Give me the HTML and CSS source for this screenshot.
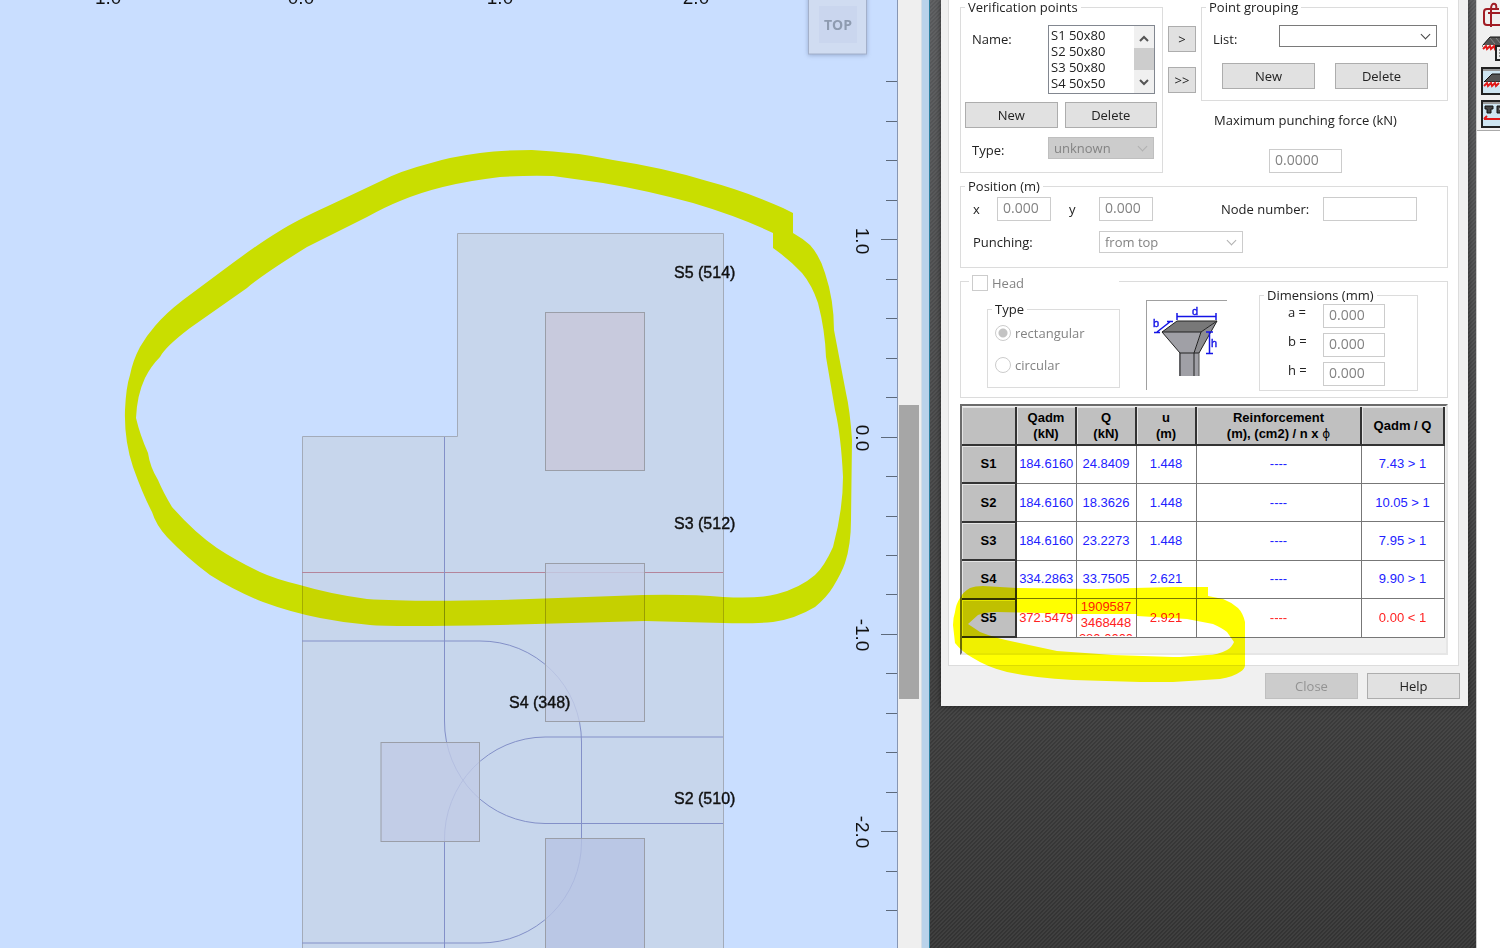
FILE: index.html
```html
<!DOCTYPE html>
<html lang="en">
<head>
  <meta charset="UTF-8" />
  <meta name="viewport" content="width=device-width, initial-scale=1.0"/>
  <title>Punching verification</title>
  <link rel="stylesheet" href="styles.css">
</head>
<body>

<main class="plan">
  <svg class="plan-view" viewBox="0 0 898 948" preserveAspectRatio="xMaxYMin slice">
    <!-- slab -->
    <path class="slab" d="M457.500 233.500H723.500V960H302.500V436.500H457.500Z"/>
    <path class="red-line" d="M302 572.500H723"/>
    <!-- critical perimeters -->
    <path class="perimeter" d="M444.500 437V721A101 102 0 0 0 545 823.500H723"/>
    <path class="perimeter" d="M723 737H545A101 102 0 0 0 444.500 841V960"/>
    <path class="perimeter" d="M302 641H480A101 101 0 0 1 581.500 742V842A101 101 0 0 1 480 943H302"/>
    <!-- columns -->
    <rect class="column s5" x="545.500" y="312.500" width="99" height="158"/>
    <rect class="column s3" x="545.500" y="563.500" width="99" height="158"/>
    <rect class="column s4" x="381" y="742.500" width="98.500" height="99"/>
    <rect class="column s2" x="545.500" y="838.500" width="99" height="158"/>
    <g class="point-label">
      <text x="674" y="278">S5 (514)</text>
      <text x="674" y="529">S3 (512)</text>
      <text x="509" y="708">S4 (348)</text>
      <text x="674" y="804">S2 (510)</text>
    </g>
    <!-- rulers -->
    <path class="tick" d="M886 81.500h12M886 121.500h12M886 160.500h12M886 200.500h12M881 239.500h17M886 279.500h12M886 318.500h12M886 358.500h12M886 397.500h12M881 437.500h17M886 476.500h12M886 516.500h12M886 555.500h12M886 594.500h12M881 634.500h17M886 673.500h12M886 713.500h12M886 752.500h12M886 792.500h12M881 831.500h17M886 871.500h12M886 910.500h12"/>
    <path class="ruler-edge" d="M897.500 0V960"/>
    <g class="ruler-label">
      <text x="105" y="4">-1.0</text>
      <text x="301" y="4">0.0</text>
      <text x="500" y="4">1.0</text>
      <text x="696" y="4">2.0</text>
      <text transform="translate(856 241) rotate(90)">1.0</text>
      <text transform="translate(856 438) rotate(90)">0.0</text>
      <text transform="translate(856 635) rotate(90)">-1.0</text>
      <text transform="translate(856 832) rotate(90)">-2.0</text>
    </g>
    <!-- view cube -->
    <rect class="cube" x="808.500" y="-6" width="58" height="60"/>
    <rect class="cube-face" x="819" y="6" width="38" height="37"/>
    <text class="cube-label" x="838" y="30">TOP</text>
    <path class="marker" fill-rule="evenodd" d="M532 150Q500 150 480 153Q450 157 431 163Q400 171 381 181Q360 191 328 206Q295 221 278 232Q258 244 222 271L183 300Q166 313 155 326Q147 335 140 347Q133 360 130 375Q126 387 125 410Q124 440 133 467Q143 495 152 512Q156 525 167 537Q187 558 210 575Q235 591 263 602Q290 612 320 618Q345 623 370 625Q390 627 500 625L645 621L723 623Q750 624 773 622Q795 619 815 607Q827 597 833 587Q842 572 845 563Q851 545 851 520L852 440Q850 410 846 393L834 330Q834 300 825 273Q820 256 810 245Q802 238 793 233V213L783 208Q745 191 707 181Q665 168 613 160Q575 152 532 150Z
      M500 177Q530 175 553 176L603 183Q645 190 693 203Q740 217 773 233V248Q790 260 802 273Q812 285 818 303Q825 330 826 357L835 410Q841 435 843 477Q843 510 833 547Q824 567 815 575Q800 588 777 594Q760 599 723 597Q690 594 643 595L500 600Q410 602 367 599Q330 594 300 585Q275 579 260 572Q235 560 217 548Q195 533 172 507Q163 492 158 480Q150 467 148 453Q140 435 136 418Q137 395 145 378Q151 366 160 357Q165 347 190 328L247 288Q262 275 307 247L367 217Q385 207 400 201Q440 184 500 177Z"/>
  </svg>
</main>

<div class="scroll-track"><div class="scroll-thumb"></div></div>
<div class="window-edge"></div>

<div class="desktop">
  <form class="dialog">
    <div class="panel">
      <div class="top-row">
        <fieldset>
          <legend>Verification points</legend>
          <div class="points">
            <label for="names">Name:</label>
            <div class="listbox">
              <select id="names" size="4">
                <option>S1 50x80</option>
                <option>S2 50x80</option>
                <option>S3 50x80</option>
                <option>S4 50x50</option>
              </select>
              <svg class="list-scroll" viewBox="0 0 20 67">
                <rect width="20" height="67" fill="#f0f0f0"/>
                <rect y="22" width="20" height="22" fill="#cdcdcd"/>
                <path d="M6 15l4-4 4 4M6 54l4 4 4-4" fill="none" stroke="#555" stroke-width="2"/>
              </svg>
            </div>
            <div class="button-pair">
              <button type="button">New</button>
              <button type="button">Delete</button>
            </div>
            <label for="kind">Type:</label>
            <span class="combo filled">
              <select id="kind" disabled><option>unknown</option></select>
            </span>
          </div>
        </fieldset>

        <div class="move-buttons">
          <button type="button">&gt;</button>
          <button type="button">&gt;&gt;</button>
        </div>

        <div>
          <fieldset>
            <legend>Point grouping</legend>
            <div class="grouping">
              <label for="group">List:</label>
              <span class="combo active">
                <select id="group"><option></option></select>
              </span>
              <div class="button-pair">
                <button type="button">New</button>
                <button type="button">Delete</button>
              </div>
            </div>
          </fieldset>
          <div class="force">
            <label for="force">Maximum punching force (kN)</label>
            <input type="text" id="force" value="0.0000" disabled />
          </div>
        </div>
      </div>

      <fieldset>
        <legend>Position (m)</legend>
        <div class="position">
          <label for="pos-x">x</label>
          <input type="text" id="pos-x" class="short" value="0.000" disabled />
          <label for="pos-y">y</label>
          <input type="text" id="pos-y" class="short" value="0.000" disabled />
          <label for="node">Node number:</label>
          <input type="text" id="node" disabled />
          <label class="wide-label" for="punching">Punching:</label>
          <span class="combo punching">
            <select id="punching" disabled><option>from top</option></select>
          </span>
        </div>
      </fieldset>

      <fieldset>
        <legend class="head-legend">
          <input type="checkbox" id="head" disabled />
          <label for="head">Head</label>
        </legend>
        <div class="head">
          <fieldset class="head-type">
            <legend>Type</legend>
            <div class="radios">
              <label><input type="radio" name="shape" checked disabled />rectangular</label>
              <label><input type="radio" name="shape" disabled />circular</label>
            </div>
          </fieldset>
          <svg class="head-picture" viewBox="0 0 81 90">
            <path d="M0 .5H81M.5 0V90" stroke="#a0a0a0" fill="none"/>
            <path d="M33 53H53V76H33Z" fill="#a0a0a6"/>
            <path d="M16 32H55L48 53H34Z" fill="#a0a0a6"/>
            <path d="M55 32L71 21L53 53H48Z" fill="#8c8c90"/>
            <path d="M16 32L31 21H71L55 32Z" fill="#787878"/>
            <path d="M16 32L31 21H71L55 32ZM16 32L34 53H48L55 32M48 53H53L71 21M34 53V76M48 53V76" fill="none" stroke="#222"/>
            <path d="M53 53V76" stroke="#555"/>
            <path d="M31 13V20M31 16.500H70M70 13V20M60 32H67M63.500 32V53M60 53.500H67M21 21.500H27M8 32.500H14M11 32L25 21" fill="none" stroke="#1414e6" stroke-width="1.500"/>
            <text x="46" y="15">d</text>
            <text x="7" y="27">b</text>
            <text x="65" y="47">h</text>
          </svg>
          <fieldset class="head-dimensions">
            <legend>Dimensions (mm)</legend>
            <div class="dimensions">
              <label for="dim-a">a =</label>
              <input type="text" id="dim-a" value="0.000" disabled />
              <label for="dim-b">b =</label>
              <input type="text" id="dim-b" value="0.000" disabled />
              <label for="dim-h">h =</label>
              <input type="text" id="dim-h" value="0.000" disabled />
            </div>
          </fieldset>
        </div>
      </fieldset>

      <div class="results">
        <table>
          <colgroup>
            <col class="col-name"><col class="col-num"><col class="col-num"><col class="col-num"><col><col class="col-ratio">
          </colgroup>
          <thead>
            <tr>
              <th></th>
              <th>Qadm<br>(kN)</th>
              <th>Q<br>(kN)</th>
              <th>u<br>(m)</th>
              <th>Reinforcement<br>(m), (cm2) / n x <span class="phi">ϕ</span></th>
              <th>Qadm / Q</th>
            </tr>
          </thead>
          <tbody>
            <tr><th>S1</th><td>184.6160</td><td>24.8409</td><td>1.448</td><td>----</td><td>7.43 &gt; 1</td></tr>
            <tr><th>S2</th><td>184.6160</td><td>18.3626</td><td>1.448</td><td>----</td><td>10.05 &gt; 1</td></tr>
            <tr><th>S3</th><td>184.6160</td><td>23.2273</td><td>1.448</td><td>----</td><td>7.95 &gt; 1</td></tr>
            <tr><th>S4</th><td>334.2863</td><td>33.7505</td><td>2.621</td><td>----</td><td>9.90 &gt; 1</td></tr>
            <tr class="failed"><th>S5</th><td>372.5479</td><td><div class="clipped">1909587<br>3468448<br>280.0000</div></td><td>2.921</td><td>----</td><td>0.00 &lt; 1</td></tr>
          </tbody>
        </table>
      </div>
    </div>

    <div class="footer">
      <button type="button" disabled>Close</button>
      <button type="button">Help</button>
    </div>

    <svg class="marker-layer" viewBox="941 0 527 706" preserveAspectRatio="xMinYMin">
      <path class="marker" fill-rule="evenodd" d="M1208 587H1173L1097 589L1017 588L983 586Q975 586 970 588Q963 592 960 598Q956 604 955 612Q953 618 953 625L955 643Q962 652 973 658Q987 667 1007 672Q1035 678 1073 680L1140 682H1173L1220 679Q1233 677 1240 672Q1245 669 1245 665V622Q1243 613 1238 608Q1231 602 1223 599L1208 596Z
        M968 624L978 615Q985 612 997 612L1040 613L1073 614H1137V616L1187 619L1213 624Q1222 628 1227 632L1234 642Q1232 647 1227 650Q1218 655 1207 655L1180 657H1173L1113 655L1057 651L1015 642Q995 638 980 632Z"/>
    </svg>
  </form>
</div>

<aside class="side">
  <div class="toolbar">
    <button type="button" aria-label="Contour">
      <svg viewBox="0 0 29 29"><path d="M18 9H6Q3 9 3 12V22Q3 25 6 25H29M10 27V9Q10 3 14 4Q16 5 15 9M7 13H20" fill="none" stroke="#a01c24" stroke-width="2"/></svg>
    </button>
    <button type="button" aria-label="Slab report">
      <svg viewBox="0 0 29 29"><path d="M2 12L9 4H29V14H2Z" fill="#555" stroke="#111"/><path d="M9 5L14 11M15 5L20 11M22 5L27 11" stroke="#888"/><rect x="2" y="12" width="20" height="4" fill="#eee"/><path d="M2 16l3-3 1 3 3-3 1 3 3-3 1 3 3-3" fill="none" stroke="#e01818" stroke-width="2"/><path d="M15 13H29V27H15Z" fill="#eee" stroke="#222" stroke-width="2"/><path d="M18 17H29M18 20H29M18 23H29" stroke="#333"/></svg>
    </button>
    <button type="button" aria-label="Slab view">
      <svg viewBox="0 0 29 29"><path d="M1 2H30V28H1Z" fill="#cfe6f2" stroke="#222" stroke-width="2"/><path d="M2 3H30V5H2Z" fill="#999"/><path d="M3 16L11 8H29V16Z" fill="#555" stroke="#111"/><rect x="3" y="16" width="26" height="4" fill="#eee"/><path d="M3 20l3-3 1 3 3-3 1 3 3-3 1 3 3-3" fill="none" stroke="#e01818" stroke-width="2"/></svg>
    </button>
    <button type="button" aria-label="Sections">
      <svg viewBox="0 0 29 29"><path d="M1 2H30V28H1Z" fill="#cfe6f2" stroke="#222" stroke-width="2"/><path d="M2 3H30V5H2Z" fill="#999"/><path d="M4 7H12V10H10V14H6V10H4ZM16 7H29V14H16Z" fill="#444" stroke="#111"/><path d="M18 10H23" stroke="#ddd"/><path d="M29 20H3M6 17L3 20" stroke="#e01818" stroke-width="2"/></svg>
    </button>
  </div>
</aside>

</body>
</html>
```
FILE: styles.css
```css
* {
  box-sizing: border-box;
}
body {
  margin: 0;
  height: 100vh;
  display: flex;
  overflow: hidden;
  background: #fff;
  color: #222;
  font: 13px/16px "Open Sans", sans-serif;
}

/* plan view */
.plan {
  flex: 1;
  min-width: 0;
  background: #c9deff;
}
.plan-view {
  display: block;
  width: 100%;
  height: 100%;
}
.slab { fill: #c7d6ec; stroke: #a3abb9; }
.red-line { stroke: #b4859b; }
.perimeter { fill: none; stroke: #8390c8; }
.column { stroke: #9a9ea8; fill-opacity: 0.8; }
.s5 { fill: #c8c7d9; }
.s3 { fill: #c4cee7; }
.s4 { fill: #c1cae6; }
.s2 { fill: #b6c3e4; }
.point-label {
  font: 16px "Liberation Sans", sans-serif;
  fill: #111;
  stroke: #111;
  stroke-width: 0.4px;
}
.tick { stroke: #5d6a7c; }
.ruler-edge { stroke: #8796b3; }
.ruler-label {
  font: 19px "Liberation Sans", sans-serif;
  fill: #111;
  text-anchor: middle;
}
.cube {
  fill: #d0dcf1;
  stroke: #a3b0ca;
  filter: drop-shadow(0 1px 2px rgba(80,100,140,0.4));
}
.cube-face { fill: #cad6ee; }
.cube-label {
  font: bold 14px "Open Sans", sans-serif;
  fill: #8e9bb0;
  text-anchor: middle;
}
.marker {
  fill: #ff0;
  mix-blend-mode: multiply;
}

.scroll-track {
  width: 23px;
  background: #efefef;
  padding-left: 1px;
}
.scroll-thumb {
  width: 20px;
  height: 31vh;
  margin-top: 405px;
  background: #a6a6a6;
}
.window-edge {
  width: 9px;
  background: #b9d2ea;
  border-left: 1px solid #d5dde5;
  border-right: 1px solid #2d7f9d;
}

/* dialog */
.desktop {
  flex: 0 0 546px;
  padding: 0 8px 0 11px;
  background:
    linear-gradient(135deg, rgba(255,255,255,0.06) 25%, transparent 25% 50%, rgba(255,255,255,0.06) 50% 75%, transparent 75%) 0 0 / 4px 4px,
    linear-gradient(#58595b, #3c3c3c 70%, #333);
}
.dialog {
  position: relative;
  background: #f0f0f0;
  padding: 0 8px 7px 7px;
  box-shadow: 0 0 6px rgba(0,0,0,0.5);
}
.panel {
  display: flex;
  flex-direction: column;
  gap: 6px;
  margin-right: 1px;
  padding: 0 10px 10px 11px;
  background: #fff;
  border: 1px solid #dcdcdc;
  border-top: none;
}
fieldset {
  margin: 0;
  padding: 0 4px;
  min-width: 0;
  border: 1px solid #dcdcdc;
}
legend {
  padding: 0 3px;
  line-height: 14px;
}
button {
  height: 26px;
  padding: 0;
  background: #e1e1e1;
  border: 1px solid #adadad;
  color: #222;
  font: inherit;
}
button:disabled {
  background: #ccc;
  border-color: #bfbfbf;
  color: #939393;
}
input[type="text"] {
  width: 100%;
  height: 24px;
  padding: 0 5px 3px;
  background: #fff;
  border: 1px solid #ccc;
  color: #838383;
  font: inherit;
  font-size: 14px;
}
.combo {
  position: relative;
}
.combo select {
  appearance: none;
  display: block;
  width: 100%;
  height: 22px;
  padding: 0 5px;
  background: #fff;
  border: 1px solid #ccc;
  border-radius: 0;
  color: #838383;
  font: inherit;
  opacity: 1;
}
.combo::after {
  content: "";
  position: absolute;
  top: 6px;
  right: 8px;
  width: 6px;
  height: 6px;
  border: solid #b0b0b0;
  border-width: 0 1px 1px 0;
  transform: rotate(45deg);
}
.active select { border-color: #7a7a7a; }
.active::after { border-color: #444; }
.filled select {
  background: #ccc;
  border-color: #bfbfbf;
}

.top-row {
  display: grid;
  grid-template-columns: 203px 28px 1fr;
  column-gap: 5px;
}
.points {
  display: grid;
  grid-template-columns: 1fr 109px;
  row-gap: 8px;
  padding: 11px 1px 10px 0;
}
.points label {
  padding: 6px 0 0 7px;
}
.points .combo {
  margin: 1px 3px 0 0;
}
.listbox {
  display: flex;
  height: 69px;
  margin-right: 2px;
  border: 1px solid #828790;
}
.listbox select {
  flex: 1;
  min-width: 0;
  padding: 1px 0;
  border: none;
  outline: none;
  overflow: hidden;
  background: #fff;
  color: #222;
  font: inherit;
}
.listbox option {
  display: flex;
  align-items: center;
  height: 16px;
  min-height: 0;
  padding: 0 2px;
}
.list-scroll {
  width: 20px;
  height: 67px;
}
.button-pair {
  grid-column: 1 / -1;
  display: grid;
  grid-template-columns: 1fr 1fr;
  column-gap: 7px;
}
.move-buttons {
  display: flex;
  flex-direction: column;
  gap: 15px;
  padding-top: 26px;
}
.grouping {
  display: grid;
  grid-template-columns: 66px 1fr;
  row-gap: 16px;
  align-items: end;
  padding: 11px 6px 11px 7px;
}
.grouping .button-pair {
  column-gap: 20px;
  padding: 0 9px;
}
.force {
  display: flex;
  flex-direction: column;
  align-items: center;
  gap: 21px;
  padding: 11px 38px 0 0;
}
.force input[type="text"] {
  width: 73px;
}
.position {
  display: grid;
  grid-template-columns: 24px 72px 30px 122px 102px 94px;
  row-gap: 10px;
  align-items: center;
  padding: 4px 0 14px 8px;
}
.position .short {
  width: 54px;
}
.wide-label {
  grid-column: span 3;
}
.punching {
  grid-column: span 2;
  width: 144px;
}
.head-legend {
  display: flex;
  width: 150px;
  height: 14px;
  margin-left: 4px;
  line-height: 18px;
  color: #838383;
}
input[type="checkbox"], input[type="radio"] {
  appearance: none;
  flex: none;
  width: 16px;
  height: 16px;
  margin: 0 4px 0 0;
  background: #fff;
  border: 1px solid #ccc;
}
input[type="checkbox"] {
  margin-top: 1px;
}
input[type="radio"] {
  border-radius: 50%;
}
input[type="radio"]:checked {
  background: radial-gradient(#c3c3c3 4px, #fff 5px);
}
.head {
  display: flex;
  align-items: flex-start;
  gap: 26px;
  padding: 0 0 6px 22px;
}
.head-type {
  flex: 0 0 133px;
  margin-top: 14px;
}
.radios {
  display: flex;
  flex-direction: column;
  gap: 16px;
  padding: 9px 3px 14px;
  color: #838383;
}
.radios label {
  display: flex;
}
.head-picture {
  flex: 0 0 81px;
  height: 90px;
  margin-top: 12px;
}
.head-picture text {
  font: 11px "Liberation Sans", sans-serif;
  fill: #1414e6;
  stroke: #1414e6;
  stroke-width: 0.4px;
}
.head-dimensions {
  flex: 0 0 159px;
  margin-left: 6px;
}
.dimensions {
  display: grid;
  grid-template-columns: 35px 62px;
  row-gap: 5px;
  padding: 2px 0 4px 24px;
}

/* results */
.results {
  padding: 1px 1px 15px 0;
  background: #f0f0f0;
  border: 2px solid #6b6b6b;
  border-right-color: #e6e6e6;
  border-bottom-color: #e6e6e6;
}
table {
  width: 100%;
  height: 231px;
  table-layout: fixed;
  border-collapse: collapse;
  background: #fff;
  color: #22f;
  font: 13px/16px "Liberation Sans", sans-serif;
  text-align: center;
}
.col-name { width: 54px; }
.col-num { width: 60px; }
.col-ratio { width: 83px; }
th, td {
  height: 38px;
  padding: 0;
  border: 1px solid #777;
}
th {
  background: #c0c0c0;
  border: solid #333;
  border-width: 0 2px 2px 0;
  box-shadow: inset 1px 1px #e4e4e4;
  color: #000;
}
.phi {
  font-family: "DejaVu Sans", sans-serif;
  font-size: 12px;
  font-weight: normal;
}
.failed td {
  color: #f22;
}
.clipped {
  height: 37px;
  overflow: hidden;
}
.footer {
  display: flex;
  justify-content: flex-end;
  gap: 9px;
  padding-top: 7px;
}
.footer button {
  width: 93px;
}
.marker-layer {
  position: absolute;
  inset: 0;
  width: 100%;
  height: 100%;
  mix-blend-mode: multiply;
  pointer-events: none;
}

/* toolbar at the right edge */
.side {
  width: 24px;
  overflow: hidden;
  border-left: 1px solid #ccc;
}
.toolbar {
  display: flex;
  flex-direction: column;
  gap: 4px;
  width: 33px;
  padding: 0 0 2px 4px;
  background: #f0f0f0;
  border-bottom: 1px solid #aaa;
}
.toolbar button {
  height: 29px;
  background: none;
  border: none;
}
.toolbar svg {
  display: block;
}
```
